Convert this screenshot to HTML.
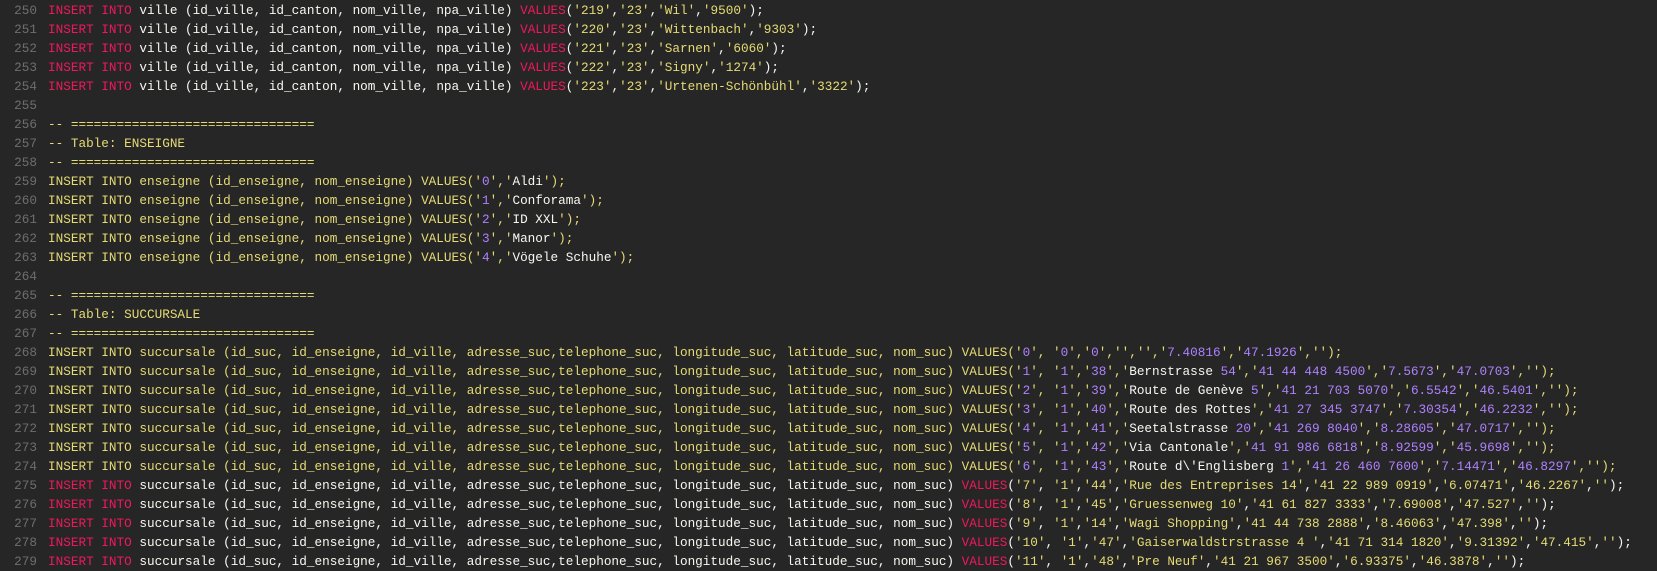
<!DOCTYPE html>
<html><head><meta charset="utf-8"><style>
html,body{margin:0;padding:0;background:#262626;width:1657px;height:570px;overflow:hidden}
.c{position:absolute;left:0;top:1px;font-family:"Liberation Mono",monospace;font-size:12.7px;line-height:19px;color:#f8f8f2;white-space:normal}
.l{display:block;height:19px;white-space:pre}
.n{display:inline-block;width:37px;text-align:right;color:#6e6e6e;margin-right:11px}
.k{color:#f0185c}.y{color:#e6db74}.p{color:#ae81ff}.w{color:#f8f8f2}
</style></head><body><div class="c"><span class="l"><span class="n">250</span><span class="k">INSERT INTO</span> ville (id_ville, id_canton, nom_ville, npa_ville) <span class="k">VALUES</span>(<span class="y">'219'</span>,<span class="y">'23'</span>,<span class="y">'Wil'</span>,<span class="y">'9500'</span>);</span><span class="l"><span class="n">251</span><span class="k">INSERT INTO</span> ville (id_ville, id_canton, nom_ville, npa_ville) <span class="k">VALUES</span>(<span class="y">'220'</span>,<span class="y">'23'</span>,<span class="y">'Wittenbach'</span>,<span class="y">'9303'</span>);</span><span class="l"><span class="n">252</span><span class="k">INSERT INTO</span> ville (id_ville, id_canton, nom_ville, npa_ville) <span class="k">VALUES</span>(<span class="y">'221'</span>,<span class="y">'23'</span>,<span class="y">'Sarnen'</span>,<span class="y">'6060'</span>);</span><span class="l"><span class="n">253</span><span class="k">INSERT INTO</span> ville (id_ville, id_canton, nom_ville, npa_ville) <span class="k">VALUES</span>(<span class="y">'222'</span>,<span class="y">'23'</span>,<span class="y">'Signy'</span>,<span class="y">'1274'</span>);</span><span class="l"><span class="n">254</span><span class="k">INSERT INTO</span> ville (id_ville, id_canton, nom_ville, npa_ville) <span class="k">VALUES</span>(<span class="y">'223'</span>,<span class="y">'23'</span>,<span class="y">'Urtenen-Schönbühl'</span>,<span class="y">'3322'</span>);</span><span class="l"><span class="n">255</span></span><span class="l"><span class="n">256</span><span class="y">-- ================================</span></span><span class="l"><span class="n">257</span><span class="y">-- Table: ENSEIGNE</span></span><span class="l"><span class="n">258</span><span class="y">-- ================================</span></span><span class="l y"><span class="n">259</span>INSERT INTO enseigne (id_enseigne, nom_enseigne) VALUES('<span class="p">0</span>','<span class="w">Aldi</span>');</span><span class="l y"><span class="n">260</span>INSERT INTO enseigne (id_enseigne, nom_enseigne) VALUES('<span class="p">1</span>','<span class="w">Conforama</span>');</span><span class="l y"><span class="n">261</span>INSERT INTO enseigne (id_enseigne, nom_enseigne) VALUES('<span class="p">2</span>','<span class="w">ID XXL</span>');</span><span class="l y"><span class="n">262</span>INSERT INTO enseigne (id_enseigne, nom_enseigne) VALUES('<span class="p">3</span>','<span class="w">Manor</span>');</span><span class="l y"><span class="n">263</span>INSERT INTO enseigne (id_enseigne, nom_enseigne) VALUES('<span class="p">4</span>','<span class="w">Vögele Schuhe</span>');</span><span class="l"><span class="n">264</span></span><span class="l"><span class="n">265</span><span class="y">-- ================================</span></span><span class="l"><span class="n">266</span><span class="y">-- Table: SUCCURSALE</span></span><span class="l"><span class="n">267</span><span class="y">-- ================================</span></span><span class="l y"><span class="n">268</span>INSERT INTO succursale (id_suc, id_enseigne, id_ville, adresse_suc,telephone_suc, longitude_suc, latitude_suc, nom_suc) VALUES('<span class="p">0</span>', '<span class="p">0</span>','<span class="p">0</span>','','','<span class="p">7.40816</span>','<span class="p">47.1926</span>','');</span><span class="l y"><span class="n">269</span>INSERT INTO succursale (id_suc, id_enseigne, id_ville, adresse_suc,telephone_suc, longitude_suc, latitude_suc, nom_suc) VALUES('<span class="p">1</span>', '<span class="p">1</span>','<span class="p">38</span>','<span class="w">Bernstrasse </span><span class="p">54</span>','<span class="p">41 44 448 4500</span>','<span class="p">7.5673</span>','<span class="p">47.0703</span>','');</span><span class="l y"><span class="n">270</span>INSERT INTO succursale (id_suc, id_enseigne, id_ville, adresse_suc,telephone_suc, longitude_suc, latitude_suc, nom_suc) VALUES('<span class="p">2</span>', '<span class="p">1</span>','<span class="p">39</span>','<span class="w">Route de Genève </span><span class="p">5</span>','<span class="p">41 21 703 5070</span>','<span class="p">6.5542</span>','<span class="p">46.5401</span>','');</span><span class="l y"><span class="n">271</span>INSERT INTO succursale (id_suc, id_enseigne, id_ville, adresse_suc,telephone_suc, longitude_suc, latitude_suc, nom_suc) VALUES('<span class="p">3</span>', '<span class="p">1</span>','<span class="p">40</span>','<span class="w">Route des Rottes</span>','<span class="p">41 27 345 3747</span>','<span class="p">7.30354</span>','<span class="p">46.2232</span>','');</span><span class="l y"><span class="n">272</span>INSERT INTO succursale (id_suc, id_enseigne, id_ville, adresse_suc,telephone_suc, longitude_suc, latitude_suc, nom_suc) VALUES('<span class="p">4</span>', '<span class="p">1</span>','<span class="p">41</span>','<span class="w">Seetalstrasse </span><span class="p">20</span>','<span class="p">41 269 8040</span>','<span class="p">8.28605</span>','<span class="p">47.0717</span>','');</span><span class="l y"><span class="n">273</span>INSERT INTO succursale (id_suc, id_enseigne, id_ville, adresse_suc,telephone_suc, longitude_suc, latitude_suc, nom_suc) VALUES('<span class="p">5</span>', '<span class="p">1</span>','<span class="p">42</span>','<span class="w">Via Cantonale</span>','<span class="p">41 91 986 6818</span>','<span class="p">8.92599</span>','<span class="p">45.9698</span>','');</span><span class="l y"><span class="n">274</span>INSERT INTO succursale (id_suc, id_enseigne, id_ville, adresse_suc,telephone_suc, longitude_suc, latitude_suc, nom_suc) VALUES('<span class="p">6</span>', '<span class="p">1</span>','<span class="p">43</span>','<span class="w">Route d\'Englisberg </span><span class="p">1</span>','<span class="p">41 26 460 7600</span>','<span class="p">7.14471</span>','<span class="p">46.8297</span>','');</span><span class="l"><span class="n">275</span><span class="k">INSERT INTO</span> succursale (id_suc, id_enseigne, id_ville, adresse_suc,telephone_suc, longitude_suc, latitude_suc, nom_suc) <span class="k">VALUES</span>(<span class="y">'7'</span>, <span class="y">'1'</span>,<span class="y">'44'</span>,<span class="y">'Rue des Entreprises 14'</span>,<span class="y">'41 22 989 0919'</span>,<span class="y">'6.07471'</span>,<span class="y">'46.2267'</span>,<span class="y">''</span>);</span><span class="l"><span class="n">276</span><span class="k">INSERT INTO</span> succursale (id_suc, id_enseigne, id_ville, adresse_suc,telephone_suc, longitude_suc, latitude_suc, nom_suc) <span class="k">VALUES</span>(<span class="y">'8'</span>, <span class="y">'1'</span>,<span class="y">'45'</span>,<span class="y">'Gruessenweg 10'</span>,<span class="y">'41 61 827 3333'</span>,<span class="y">'7.69008'</span>,<span class="y">'47.527'</span>,<span class="y">''</span>);</span><span class="l"><span class="n">277</span><span class="k">INSERT INTO</span> succursale (id_suc, id_enseigne, id_ville, adresse_suc,telephone_suc, longitude_suc, latitude_suc, nom_suc) <span class="k">VALUES</span>(<span class="y">'9'</span>, <span class="y">'1'</span>,<span class="y">'14'</span>,<span class="y">'Wagi Shopping'</span>,<span class="y">'41 44 738 2888'</span>,<span class="y">'8.46063'</span>,<span class="y">'47.398'</span>,<span class="y">''</span>);</span><span class="l"><span class="n">278</span><span class="k">INSERT INTO</span> succursale (id_suc, id_enseigne, id_ville, adresse_suc,telephone_suc, longitude_suc, latitude_suc, nom_suc) <span class="k">VALUES</span>(<span class="y">'10'</span>, <span class="y">'1'</span>,<span class="y">'47'</span>,<span class="y">'Gaiserwaldstrstrasse 4 '</span>,<span class="y">'41 71 314 1820'</span>,<span class="y">'9.31392'</span>,<span class="y">'47.415'</span>,<span class="y">''</span>);</span><span class="l"><span class="n">279</span><span class="k">INSERT INTO</span> succursale (id_suc, id_enseigne, id_ville, adresse_suc,telephone_suc, longitude_suc, latitude_suc, nom_suc) <span class="k">VALUES</span>(<span class="y">'11'</span>, <span class="y">'1'</span>,<span class="y">'48'</span>,<span class="y">'Pre Neuf'</span>,<span class="y">'41 21 967 3500'</span>,<span class="y">'6.93375'</span>,<span class="y">'46.3878'</span>,<span class="y">''</span>);</span></div></body></html>
